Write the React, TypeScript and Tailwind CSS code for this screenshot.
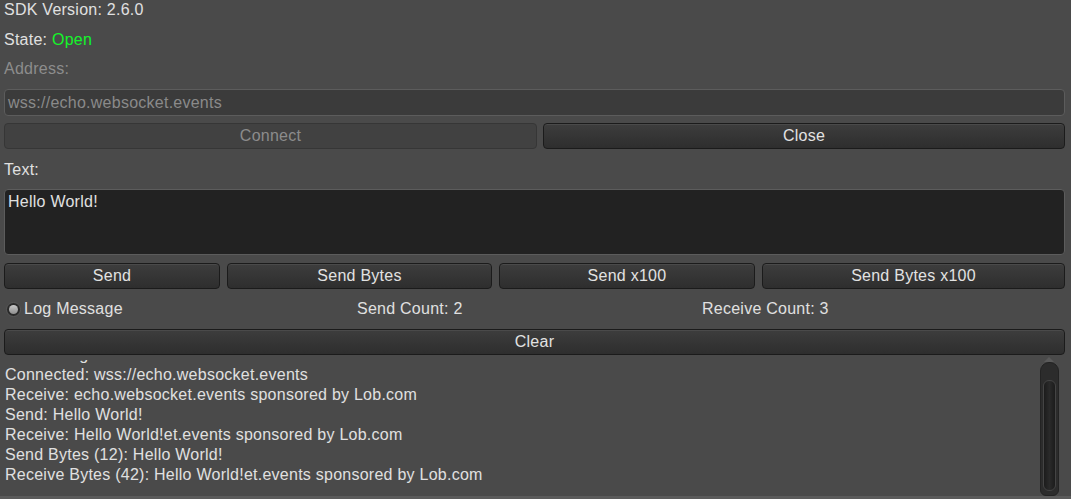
import React from 'react';

const btn =
  'h-[26px] flex items-center justify-center rounded-[4px] border border-[#1b1b1b] bg-gradient-to-b from-[#3d3d3d] to-[#2e2e2e] shadow-[inset_0_1px_0_#4a4a4a] text-[#e2e2e2]';

const logLines = [
  'Connecting...',
  'Connected: wss://echo.websocket.events',
  'Receive: echo.websocket.events sponsored by Lob.com',
  'Send: Hello World!',
  'Receive: Hello World!et.events sponsored by Lob.com',
  'Send Bytes (12): Hello World!',
  'Receive Bytes (42): Hello World!et.events sponsored by Lob.com',
];

const App: React.FC = () => {
  return (
    <div
      className="w-[1071px] h-[499px] bg-[#4a4a4a] text-[16px] tracking-[0.25px] text-[#e0e0e0] flex flex-col overflow-hidden"
      style={{ fontFamily: '"Liberation Sans", Arial, sans-serif' }}
    >
      <div className="pl-[4px] pr-[6px] flex flex-col">
        <div className="h-[19px] flex items-center">SDK Version: 2.6.0</div>
        <div className="h-[20px] mt-[11px] flex items-center">
          State:&nbsp;<span className="text-[#14f52a]">Open</span>
        </div>
        <div className="h-[20px] mt-[9px] flex items-center text-[#8d8d8d]">Address:</div>

        <div className="h-[27px] mt-[10px] flex items-center px-[3px] rounded-[4px] border border-[#5c5c5c] bg-[#3b3b3b] text-[#8a8a8a]">
          wss://echo.websocket.events
        </div>

        <div className="mt-[7px] flex gap-[6px]">
          <div className="w-[533px] h-[26px] flex items-center justify-center rounded-[4px] border border-[#363636] bg-[#414141] text-[#8c8c8c]">
            Connect
          </div>
          <div className={`${btn} flex-1`}>Close</div>
        </div>

        <div className="h-[20px] mt-[11px] flex items-center">Text:</div>

        <div className="h-[66px] mt-[9px] rounded-[4px] border border-[#5c5c5c] bg-[#222222] px-[3px] pt-[2px] leading-[20px]">
          Hello World!
        </div>

        <div className="mt-[8px] flex gap-[7px]">
          <div className={`${btn} w-[216px]`}>Send</div>
          <div className={`${btn} w-[265px]`}>Send Bytes</div>
          <div className={`${btn} w-[256px]`}>Send x100</div>
          <div className={`${btn} flex-1`}>Send Bytes x100</div>
        </div>

        <div className="h-[20px] mt-[10px] flex items-center">
          <div className="w-[353px] flex items-center">
            <span className="ml-[2px] w-[15px] h-[15px] rounded-full bg-[#2a2a2a] border border-[#5a5a5a] flex items-center justify-center">
              <span className="w-[9px] h-[9px] rounded-full bg-gradient-to-b from-[#c8c8c8] to-[#8e8e8e]" />
            </span>
            <span className="ml-[3px]">Log Message</span>
          </div>
          <div className="w-[345px]">Send Count: 2</div>
          <div>Receive Count: 3</div>
        </div>

        <div className={`${btn} mt-[10px]`}>Clear</div>
      </div>

      <div className="mt-[2px] flex-1 flex pl-[5px] pr-[12px] border-b-[3px] border-[#5b5b5b] overflow-hidden">
        <div className="flex-1 flex flex-col">
          <div className="mt-[3px] flex-1 overflow-hidden">
            <div className="mt-[-15px] leading-[20px]">
              {logLines.map((l, i) => (
                <div key={i} className="whitespace-nowrap">
                  {l}
                </div>
              ))}
            </div>
          </div>
        </div>
        <div className="w-[20px] flex flex-col items-center">
          <svg width="10" height="5" viewBox="0 0 10 5" className="block">
            <path d="M5 0 L10 5 L0 5 Z" fill="#5a5a5a" />
          </svg>
          <div className="flex-1 w-[19px] rounded-t-[9px] rounded-b-[6px] bg-[#2c2c2c] border border-[#232323] flex flex-col px-[2px] pt-[17px] pb-[4px]">
            <div className="flex-1 rounded-[6px] border border-[#444444] bg-gradient-to-r from-[#1c1c1c] via-[#2a2a2a] to-[#1c1c1c]" />
          </div>
        </div>
      </div>
    </div>
  );
};

export default App;
